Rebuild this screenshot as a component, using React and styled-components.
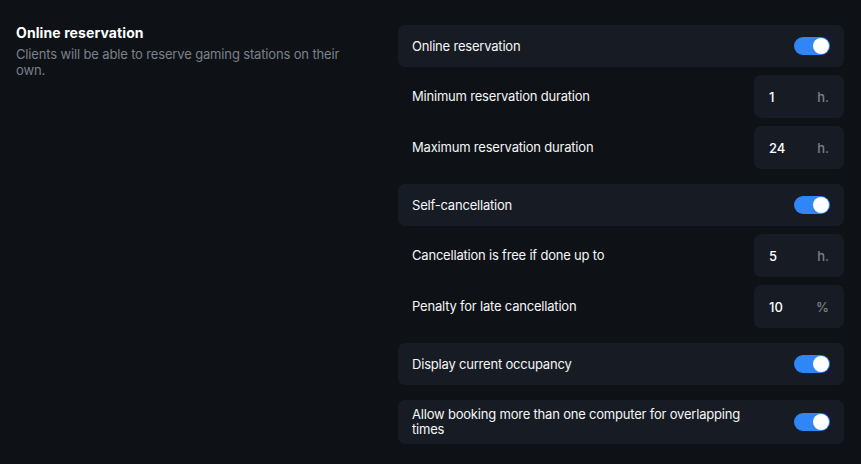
import React, { useState } from "react";
import styled, { createGlobalStyle } from "styled-components";

const GlobalStyle = createGlobalStyle`
  html, body {
    margin: 0;
    padding: 0;
    background: #0e1116;
  }
  body {
    font-family: Inter, "Noto Sans", "Liberation Sans", sans-serif;
    color: #f2f4f7;
    -webkit-font-smoothing: antialiased;
  }
`;

function Toggle({ on, onChange }) {
  return (
    <Switch $on={on} onClick={() => onChange(!on)}>
      <Knob $on={on} />
    </Switch>
  );
}

function NumberRow({ label, value, unit }) {
  return (
    <Row>
      <Label>{label}</Label>
      <InputBox>
        <Value>{value}</Value>
        <Unit>{unit}</Unit>
      </InputBox>
    </Row>
  );
}

function ToggleCard({ label, on, onChange }) {
  return (
    <Card>
      <Label>{label}</Label>
      <Toggle on={on} onChange={onChange} />
    </Card>
  );
}

export default function App() {
  const [online, setOnline] = useState(true);
  const [selfCancel, setSelfCancel] = useState(true);
  const [occupancy, setOccupancy] = useState(true);
  const [overlap, setOverlap] = useState(true);

  return (
    <Wrapper>
      <GlobalStyle />
      <Intro>
        <Title>Online reservation</Title>
        <Description>
          Clients will be able to reserve gaming stations on their own.
        </Description>
      </Intro>
      <Settings>
        <Group>
          <ToggleCard label="Online reservation" on={online} onChange={setOnline} />
          <NumberRow label="Minimum reservation duration" value="1" unit="h." />
          <NumberRow label="Maximum reservation duration" value="24" unit="h." />
        </Group>
        <Group>
          <ToggleCard label="Self-cancellation" on={selfCancel} onChange={setSelfCancel} />
          <NumberRow label="Cancellation is free if done up to" value="5" unit="h." />
          <NumberRow label="Penalty for late cancellation" value="10" unit="%" />
        </Group>
        <Group>
          <ToggleCard label="Display current occupancy" on={occupancy} onChange={setOccupancy} />
        </Group>
        <Group>
          <ToggleCard
            label="Allow booking more than one computer for overlapping times"
            on={overlap}
            onChange={setOverlap}
          />
        </Group>
      </Settings>
    </Wrapper>
  );
}

const Wrapper = styled.div`
  display: grid;
  grid-template-columns: 1fr 446px;
  column-gap: 40px;
  padding: 25px 17px 20px 16px;
  min-height: 464px;
  box-sizing: border-box;
`;

const Intro = styled.div`
  display: flex;
  flex-direction: column;
  gap: 5px;
`;

const Title = styled.h2`
  margin: 0;
  font-size: 14px;
  line-height: 16px;
  font-weight: 700;
  letter-spacing: 0.1px;
  color: #ffffff;
`;

const Description = styled.p`
  margin: 0;
  max-width: 345px;
  font-size: 13px;
  line-height: 16px;
  letter-spacing: -0.15px;
  color: #7b818b;
`;

const Settings = styled.div`
  display: flex;
  flex-direction: column;
  gap: 15px;
`;

const Group = styled.div`
  display: flex;
  flex-direction: column;
  gap: 8px;
`;

const Card = styled.div`
  display: flex;
  align-items: center;
  justify-content: space-between;
  min-height: 42px;
  box-sizing: border-box;
  padding: 7px 14px;
  background: #171c24;
  border-radius: 7px;
`;

const Row = styled.div`
  display: flex;
  align-items: center;
  justify-content: space-between;
  height: 43px;
  padding-left: 14px;
`;

const Label = styled.span`
  max-width: 345px;
  font-size: 13px;
  line-height: 15px;
  font-weight: 400;
  letter-spacing: -0.2px;
  color: #f4f6f8;
`;

const InputBox = styled.div`
  display: flex;
  align-items: center;
  justify-content: space-between;
  width: 90px;
  height: 43px;
  box-sizing: border-box;
  padding: 0 15px;
  background: #171c24;
  border-radius: 7px;
`;

const Value = styled.span`
  font-size: 13px;
  font-weight: 500;
  color: #ffffff;
`;

const Unit = styled.span`
  font-size: 13px;
  font-weight: 500;
  color: #7b818b;
`;

const Switch = styled.button`
  position: relative;
  flex-shrink: 0;
  width: 36px;
  height: 18px;
  padding: 0;
  border: none;
  border-radius: 9px;
  background: ${(p) => (p.$on ? "#2e86f7" : "#3a414c")};
  cursor: pointer;
`;

const Knob = styled.span`
  position: absolute;
  top: 1px;
  left: ${(p) => (p.$on ? "19px" : "1px")};
  width: 16px;
  height: 16px;
  border-radius: 50%;
  background: #ffffff;
`;
